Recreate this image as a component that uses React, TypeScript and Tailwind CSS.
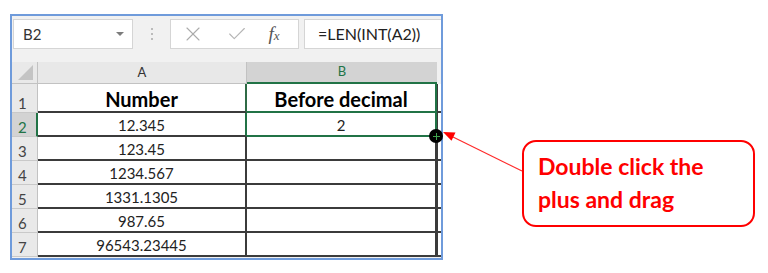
import { X, Check } from 'lucide-react';
import clsx from 'clsx';

const GRID = 'border-[#3b3b3b]';

const values = ['12.345', '123.45', '1234.567', '1331.1305', '987.65', '96543.23445'];

function RowHead({ n, selected }: { n: number; selected?: boolean }) {
  return (
    <div
      className={clsx(
        'w-[26px] shrink-0 flex items-end pl-[6px] pb-[1px] leading-[16px] text-[15px] border-b border-b-[#c9c9c9]',
        selected
          ? 'bg-[#d3d3d3] text-[#217346] border-r-2 border-r-[#217346]'
          : 'bg-[#e9e9e9] text-[#444] border-r border-r-[#c2c2c2]',
      )}
    >
      {n}
    </div>
  );
}

function Sheet() {
  return (
    <div className="ml-[10px] mt-[14px] w-[433px] h-[246px] shrink-0 border-2 border-[#6f9bdb] bg-[#f1f1f1] flex flex-col">
      {/* formula bar */}
      <div className="h-[46px] shrink-0 flex items-start pt-[3px] pl-[1px]">
        <div className="w-[120px] h-[30px] border border-[#d5d5d5] bg-white flex items-center justify-between pl-[9px] pr-[8px] text-[15px] text-[#333]">
          <span>B2</span>
          <span className="w-0 h-0 border-l-[4px] border-r-[4px] border-t-[4px] border-l-transparent border-r-transparent border-t-[#7c7c7c]" />
        </div>
        <div className="w-[37px] h-[30px] flex flex-col items-center justify-center gap-[3px]">
          <span className="w-[2px] h-[2px] bg-[#bbb]" />
          <span className="w-[2px] h-[2px] bg-[#bbb]" />
          <span className="w-[2px] h-[2px] bg-[#bbb]" />
        </div>
        <div className="w-[129px] h-[30px] border border-[#d5d5d5] bg-white flex items-center">
          <span className="w-[44px] flex justify-center">
            <X size={24} strokeWidth={1.1} color="#ababab" />
          </span>
          <span className="w-[44px] flex justify-center">
            <Check size={22} strokeWidth={1.2} color="#b5b5b5" />
          </span>
          <span className="w-[30px] flex justify-center items-baseline [font-family:'Liberation_Serif',serif] italic text-[#555]">
            <span className="text-[19px]">f</span>
            <span className="text-[13px]">x</span>
          </span>
        </div>
        <div className="ml-[5px] flex-1 h-[30px] border-y border-l border-[#d5d5d5] bg-white flex items-center pl-[13px] text-[16px] text-[#222]">
          =LEN(INT(A2))
        </div>
      </div>

      {/* column headers */}
      <div className="h-[22px] shrink-0 flex">
        <div className="w-[26px] shrink-0 bg-[#e9e9e9] border-r border-b border-[#c2c2c2] flex items-end justify-end pr-[4px] pb-[3px]">
          <svg width="15" height="15" viewBox="0 0 15 15">
            <polygon points="15,0 15,15 0,15" fill="#c4c4c4" />
          </svg>
        </div>
        <div className="w-[209px] shrink-0 bg-[#e8e8e8] border-r border-b border-[#c2c2c2] flex items-center justify-center text-[13px] text-[#333]">
          A
        </div>
        <div className="w-[190px] shrink-0 bg-[#d3d3d3] border-b-2 border-[#217346] flex items-center justify-center text-[13px] text-[#217346]">
          B
        </div>
        <div className="flex-1" />
      </div>

      {/* row 1 */}
      <div className="h-[29px] shrink-0 flex bg-white">
        <RowHead n={1} />
        <div className={clsx('w-[209px] shrink-0 border-b-2 border-r-2', GRID, 'border-r-[#2f6b46]', 'flex items-end justify-center pb-[2px] leading-[20px] text-[20px] font-bold text-black')}>
          Number
        </div>
        <div className="w-[190px] shrink-0 border-b-2 border-r-2 border-b-[#217346] border-r-[#217346] flex items-end justify-center pb-[2px] leading-[20px] text-[20px] font-bold text-black">
          Before decimal
        </div>
        <div className={clsx('flex-1 border-b-2 border-l', GRID)} />
      </div>

      {values.map((v, i) => {
        const sel = i === 0;
        return (
          <div key={v} className="h-[24px] shrink-0 flex bg-white">
            <RowHead n={i + 2} selected={sel} />
            <div
              className={clsx(
                'w-[209px] shrink-0 border-b-2 border-r-2 flex items-end justify-center pb-[2px] leading-[16px] text-[15px] text-[#222]',
                GRID,
                sel && 'border-r-[#217346]',
              )}
            >
              {v}
            </div>
            <div
              className={clsx(
                'relative w-[190px] shrink-0 border-b-2 border-r-2 flex items-end justify-center pb-[2px] leading-[16px] text-[15px] text-[#222]',
                sel ? 'border-[#217346]' : GRID,
              )}
            >
              {sel ? '2' : ''}
              {sel && (
                <span className="absolute -right-[8px] -bottom-[8px] z-10 w-[14px] h-[14px] rounded-full bg-black flex items-center justify-center">
                  <span className="relative w-[7px] h-[7px]">
                    <span className="absolute left-0 top-[3px] w-[7px] h-[1px] bg-[#3fa34d]" />
                    <span className="absolute left-[3px] top-0 w-[1px] h-[7px] bg-[#3fa34d]" />
                  </span>
                </span>
              )}
            </div>
            <div className={clsx('flex-1 border-b-2 border-l', GRID)} />
          </div>
        );
      })}
    </div>
  );
}

export default function App() {
  return (
    <div className="relative w-[768px] h-[273px] bg-white overflow-hidden flex items-start [font-family:Lato,'Noto_Sans',sans-serif]">
      <Sheet />

      <div className="ml-[79px] mt-[140px] w-[233px] h-[87px] shrink-0 border-2 border-[#ff0000] rounded-[14px] bg-white pl-[14px] pt-[8px] text-[23px] leading-[33px] font-bold text-[#ff0000] whitespace-nowrap">
        Double click the
        <br />
        plus and drag
      </div>

      <svg className="absolute left-0 top-0 pointer-events-none" width="768" height="273" viewBox="0 0 768 273">
        <line x1="522" y1="171" x2="452" y2="136.5" stroke="#ff2a2a" strokeWidth="1.2" />
        <polygon points="443,132 455.5,132.6 451.5,140.8" fill="#ff0000" />
      </svg>
    </div>
  );
}
